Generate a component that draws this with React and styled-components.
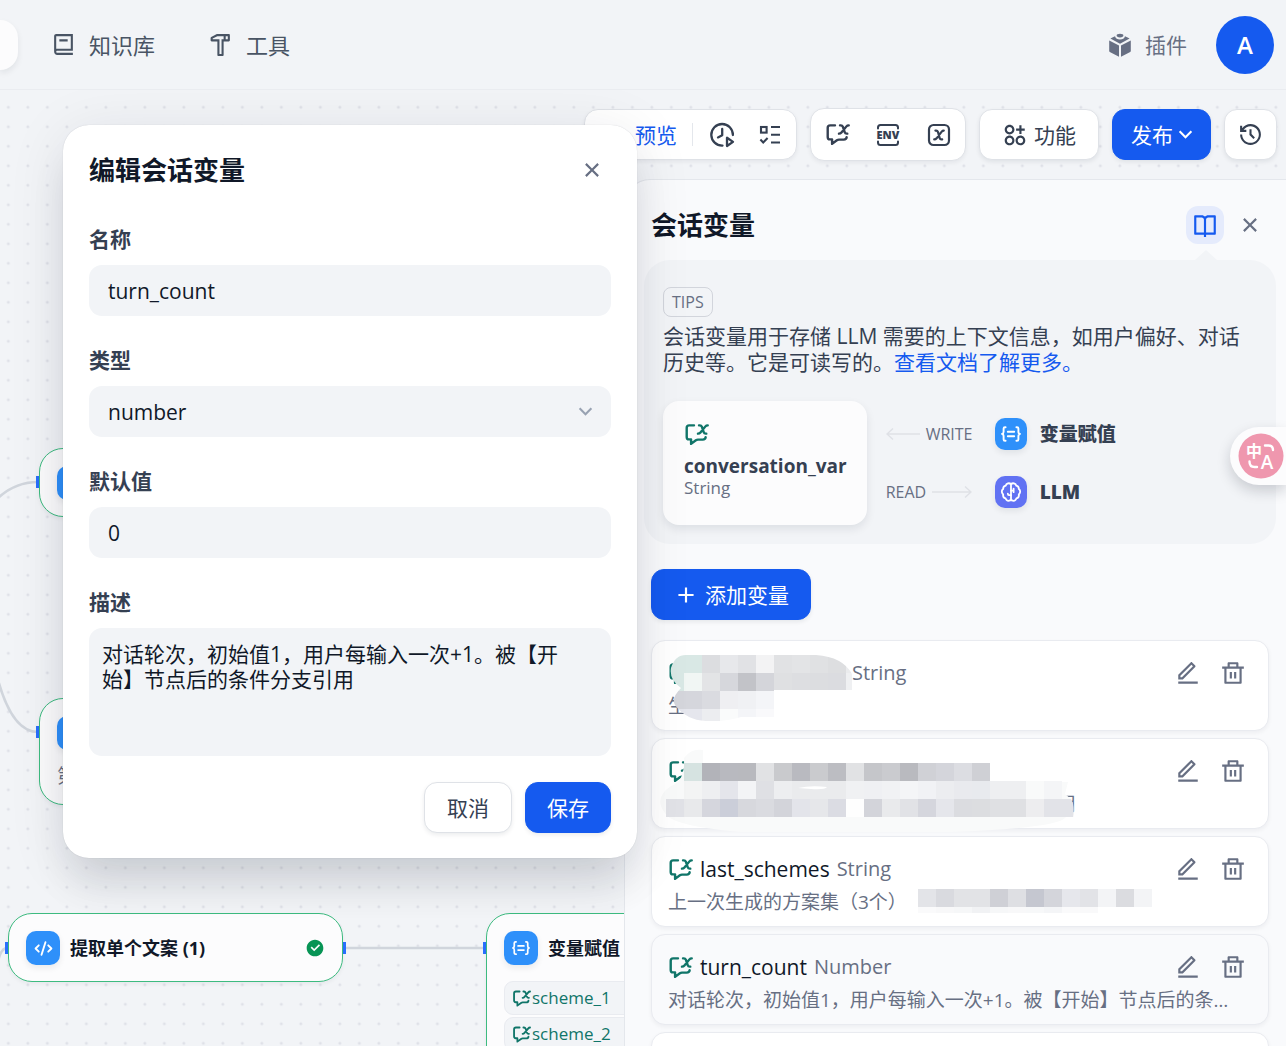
import React, { useState } from 'react'
import styled, { createGlobalStyle } from 'styled-components'
import {
    RiAddLine,
    RiApps2AddLine,
    RiArrowDownSLine,
    RiBook2Line,
    RiBookOpenLine,
    RiCheckboxCircleFill,
    RiCloseLine,
    RiDeleteBinLine,
    RiEditLine,
    RiHammerLine,
    RiHistoryLine,
    RiPlayLargeLine,
} from 'react-icons/ri'
import { CodeXml } from 'lucide-react'

const GlobalStyle = createGlobalStyle`
    * {
        box-sizing: border-box;
    }

    body {
        margin: 0;
        background: #f2f4f7;
        color: #101828;
        font-family: 'Open Sans', 'Noto Sans CJK SC', sans-serif;
        font-size: 21px;
        line-height: 26px;
    }

    button,
    input,
    select,
    textarea {
        font: inherit;
        color: inherit;
        margin: 0;
    }

    button {
        cursor: pointer;
    }

    svg {
        flex-shrink: 0;
        display: block;
    }

    h2,
    p {
        margin: 0;
    }
`

const Page = styled.div`
    display: flex;
    flex-direction: column;
    height: 100vh;
    overflow: hidden;
`

/* header */

const Header = styled.header`
    display: flex;
    align-items: center;
    height: 90px;
    padding-right: 12px;
    border-bottom: 1px solid #eaecf0;
`

const ActiveTab = styled.div`
    width: 18px;
    height: 50px;
    margin-right: 33px;
    border-radius: 0 18px 18px 0;
    background: #fcfcfd;
    box-shadow: 0 3px 6px rgba(16, 24, 40, 0.08);
`

const Nav = styled.nav`
    display: flex;
    flex: 1;
    gap: 53px;
`

const NavLink = styled.a`
    display: flex;
    align-items: center;
    gap: 13px;
    font-size: 22px;
    line-height: 24px;
    color: #495464;
    text-decoration: none;
`

const PluginLink = styled(NavLink)`
    margin-right: 29px;
    font-size: 21px;
    color: #676f83;
`

const Avatar = styled.button`
    width: 58px;
    height: 58px;
    padding: 0;
    border: 0;
    border-radius: 50%;
    background: #155aef;
    color: #fff;
    font-size: 24px;
    font-weight: 600;
`

/* workspace */

const Workspace = styled.main`
    position: relative;
    display: flex;
    flex: 1;
    flex-direction: column;
    min-height: 0;
    overflow: hidden;
    border-top-right-radius: 16px;
`

const Canvas = styled.div`
    position: absolute;
    inset: 0;
`

const CanvasDrawing = styled.svg`
    position: absolute;
    inset: 0;
    width: 100%;
    height: 100%;
`

const NodeCard = styled.div`
    position: absolute;
    left: ${p => p.$x}px;
    top: ${p => p.$y}px;
    width: 335px;
    min-height: ${p => p.$h}px;
    padding: 17px 17px 16px;
    border: 1px solid #3dbb80;
    border-radius: 24px;
    background: #fcfcfd;
    box-shadow: 0 2px 4px rgba(16, 24, 40, 0.05);
`

const NodeHead = styled.div`
    display: flex;
    align-items: center;
    gap: 10px;
    font-size: 18px;
    font-weight: 700;

    & > span {
        flex: 1;
    }
`

const NodeText = styled.p`
    margin-top: 14px;
    font-size: 19px;
    line-height: 24px;
    color: #676f83;
`

const NodeVar = styled.div`
    display: flex;
    align-items: center;
    gap: 1px;
    height: 34px;
    margin-top: ${p => (p.$first ? 16 : 2)}px;
    padding: 0 7px;
    border: 1px solid #e9ebf0;
    border-radius: 9px;
    background: #f2f4f7;
    color: #107569;
    font-size: 17px;
`

const BlockIcon = styled.span`
    display: flex;
    align-items: center;
    justify-content: center;
    flex: 0 0 auto !important;
    width: ${p => p.$size}px;
    height: ${p => p.$size}px;
    border-radius: 10px;
    background: ${p => p.$color};
    color: #fff;
    box-shadow: 0 3px 6px rgba(16, 24, 40, 0.08);
`

/* toolbar */

const Toolbar = styled.div`
    position: relative;
    display: flex;
    align-items: center;
    justify-content: flex-end;
    gap: 13px;
    height: 89px;
    padding-right: 9px;
    flex-shrink: 0;
`

const ToolGroup = styled.div`
    display: flex;
    align-items: center;
    gap: ${p => p.$gap}px;
    height: ${p => p.$height}px;
    padding: 0 7px;
    border: 1px solid #dfe2e7;
    border-radius: 14px;
    background: #fff;
    box-shadow: 0 2px 4px rgba(16, 24, 40, 0.06);
`

const Divider = styled.span`
    width: 1px;
    height: 23px;
    background: #e4e7ec;
`

const IconButton = styled.button`
    display: flex;
    align-items: center;
    justify-content: center;
    width: 38px;
    height: 38px;
    padding: 0;
    border: 0;
    border-radius: 12px;
    background: ${p => (p.$active ? '#e5ebfc' : 'transparent')};
    color: ${p => (p.$active ? '#155aef' : p.$dark ? '#354052' : '#676f83')};
`

const RunButton = styled.button`
    display: flex;
    align-items: center;
    gap: 7px;
    height: 38px;
    padding: 0 5px 0 12px;
    border: 0;
    background: transparent;
    color: #155aef;
`

const Button = styled.button`
    display: flex;
    align-items: center;
    justify-content: center;
    gap: ${p => p.$gap || 0}px;
    height: 51px;
    padding: 0 ${p => p.$padRight || p.$pad}px 0 ${p => p.$pad}px;
    border: 1px solid ${p => (p.$primary ? '#155aef' : '#dfe2e7')};
    border-radius: 13px;
    background: ${p => (p.$primary ? '#155aef' : '#fff')};
    color: ${p => (p.$primary ? '#fff' : '#354052')};
    box-shadow: 0 2px 4px rgba(16, 24, 40, 0.08);
`

/* side panel */

const Panel = styled.aside`
    position: relative;
    flex: 1;
    align-self: flex-end;
    width: min(662px, 100%);
    min-height: 0;
    padding: 26px 17px 0 26px;
    border: 1px solid #e4e7ec;
    border-width: 1px 0 0 1px;
    border-top-left-radius: 26px;
    background: #f9fafc;
`

const PanelHead = styled.div`
    display: flex;
    align-items: center;
    gap: 7px;

    & > h2 {
        flex: 1;
    }
`

const Title = styled.h2`
    font-size: 26px;
    line-height: 38px;
    font-weight: 700;
`

const Tips = styled.section`
    position: relative;
    margin: 16px -7px 25px;
    padding: 27px 19px 19px;
    border-radius: 26px;
    background: #f2f4f7;

    &::before {
        content: '';
        position: absolute;
        top: -10px;
        right: 59px;
        border: 11px solid transparent;
        border-top: 0;
        border-bottom: 10px solid #f2f4f7;
    }
`

const Tag = styled.span`
    display: inline-flex;
    align-items: center;
    height: 30px;
    margin-bottom: 6px;
    padding: 0 8px;
    border: 1px solid #d2d5dc;
    border-radius: 8px;
    font-size: 16px;
    color: #676f83;
    vertical-align: top;
`

const TipsText = styled.p`
    color: #354052;

    & > a {
        color: #155aef;
        text-decoration: none;
    }
`

const Flow = styled.div`
    display: flex;
    gap: 19px;
    margin-top: 26px;
`

const VarCard = styled.div`
    height: 124px;
    padding: 21px 20px 0 21px;
    border-radius: 16px;
    background: #fcfcfd;
    box-shadow: 0 4px 10px rgba(16, 24, 40, 0.09);
    color: #354052;
    line-height: 24px;

    & > svg {
        margin-bottom: 7px;
    }

    & > strong {
        display: block;
        font-size: 19px;
        font-weight: 700;
    }

    & > span {
        display: block;
        font-size: 17px;
        line-height: 20px;
        color: #676f83;
    }
`

const FlowRows = styled.div`
    display: flex;
    flex-direction: column;
    gap: 26px;
    padding-top: 17px;
`

const FlowRow = styled.div`
    display: flex;
    align-items: center;
    height: 32px;
    color: #354052;
    font-size: 19px;
    font-weight: 700;

    & > strong {
        margin-left: 13px;
    }
`

const FlowLabel = styled.span`
    display: flex;
    align-items: center;
    gap: 6px;
    width: 109px;
    color: #676f83;
    font-size: 16px;
    font-weight: 400;
`

const VarList = styled.ul`
    display: flex;
    flex-direction: column;
    gap: 7px;
    margin: 20px 0 0;
    padding: 0;
    list-style: none;
`

const VarItem = styled.li`
    position: relative;
    height: 91px;
    padding: 12px 16px;
    border: 1px solid #e9ebf0;
    border-radius: 14px;
    background: ${p => (p.$active ? '#f9fafc' : '#fff')};
    box-shadow: 0 2px 4px rgba(16, 24, 40, 0.05);
`

const VarHead = styled.div`
    display: flex;
    align-items: center;
    gap: 7px;
    height: 40px;
`

const VarName = styled.span`
    min-width: ${p => p.$blank || 0}px;
`

const VarType = styled.span`
    flex: 1;
    font-size: 20px;
    color: #676f83;
`

const VarDesc = styled.p`
    margin-right: 8px;
    padding-left: ${p => p.$blank || 0}px;
    overflow: hidden;
    font-size: 19px;
    line-height: 26px;
    color: #676f83;
    text-overflow: ellipsis;
    white-space: nowrap;
`

const MosaicSvg = styled.svg`
    position: absolute;
    top: -1px;
    left: -1px;
    overflow: visible;
    pointer-events: none;
`

/* dialog */

const Dialog = styled.form`
    position: absolute;
    top: 35px;
    left: 63px;
    width: min(574px, 100%);
    padding: 26px 26px 25px;
    border-radius: 26px;
    background: #fff;
    box-shadow: 0 0 1px rgba(16, 24, 40, 0.2), 0 32px 40px -8px rgba(16, 24, 40, 0.12),
        0 8px 60px rgba(16, 24, 40, 0.09);
`

const DialogHead = styled.div`
    display: flex;
    align-items: center;
    justify-content: space-between;
    margin-bottom: 38px;
`

const Field = styled.div`
    position: relative;
    margin-bottom: ${p => (p.$last ? 26 : 32)}px;

    & > svg {
        position: absolute;
        right: 13px;
        bottom: 13px;
        color: #98a2b2;
        pointer-events: none;
    }
`

const Label = styled.label`
    display: block;
    margin-bottom: 14px;
    color: #354052;
    font-weight: 700;
    line-height: 24px;
`

const Input = styled.input`
    display: block;
    width: 100%;
    height: 51px;
    padding: 0 19px;
    border: 0;
    border-radius: 13px;
    background: #f2f4f7;
`

const Select = styled(Input).attrs({ as: 'select' })`
    appearance: none;
`

const TextArea = styled.textarea`
    display: block;
    width: 100%;
    height: 128px;
    padding: 14px 22px 13px 13px;
    border: 0;
    border-radius: 13px;
    background: #f2f4f7;
    line-height: 25px;
    resize: none;
`

const DialogFoot = styled.div`
    display: flex;
    justify-content: flex-end;
    gap: 13px;
`

const TranslateTab = styled.button`
    position: absolute;
    top: 337px;
    right: 0;
    width: 56px;
    height: 58px;
    padding: 0 0 0 8px;
    border: 0;
    border-radius: 29px 0 0 29px;
    background: #fcfcfd;
    box-shadow: 0 6px 14px rgba(16, 24, 40, 0.18);
`

/* icons */

const BubbleX = ({ size = 24, color = 'currentColor' }) => (
    <svg width={size} height={size} viewBox="0 0 24 24" fill="none" stroke={color} strokeWidth="2.3" strokeLinecap="round" strokeLinejoin="round">
        <path d="M9.6 3.2H5Q2.6 3.2 2.6 5.6V14.3Q2.6 16.7 4.6 16.7H6.8V21L11.4 17.6Q12.4 16.9 13.4 16.9H18Q20.6 16.9 20.8 14.6" />
        <path d="M14.4 3.2H15.2Q16.6 3.2 17.1 4.5L18.9 9.8Q19.4 11.2 20.8 11.2H21.4M22.8 3.2Q21.4 3.2 20.6 4.2L15.8 10Q14.8 11.2 13.4 11.2" />
    </svg>
)

const EnvIcon = () => (
    <svg width="26" height="24" viewBox="0 0 26 24" fill="none" stroke="currentColor" strokeWidth="2" strokeLinecap="round">
        <path d="M3 5.5V4.5Q3 2 5.5 2H20.5Q23 2 23 4.5V5.5M3 18.5V19.5Q3 22 5.5 22H20.5Q23 22 23 19.5V18.5" />
        <text x="13" y="16" textAnchor="middle" fontSize="11" fontWeight="800" fontFamily="Open Sans, sans-serif" fill="currentColor" stroke="none">
            ENV
        </text>
    </svg>
)

const GlobalVarIcon = () => (
    <svg width="24" height="24" viewBox="0 0 24 24" fill="none" stroke="currentColor" strokeWidth="2.2" strokeLinecap="round">
        <rect x="2" y="2" width="20" height="20" rx="4.5" />
        <path d="M8.4 7.6H9.2Q10.5 7.6 10.9 8.8L12.7 15.1Q13.1 16.4 14.3 16.4H15.2M16.8 7.6Q15.5 7.6 14.7 8.6L9.6 15.3Q8.7 16.4 7.2 16.4" />
    </svg>
)

const ClockPlayIcon = () => (
    <svg width="26" height="26" viewBox="0 0 26 26" fill="none" stroke="currentColor" strokeWidth="2.3" strokeLinejoin="round" strokeLinecap="round">
        <path d="M13.5 23.6A10.8 10.8 0 1 1 23.9 13" />
        <path d="M13.2 7V13.2L9 15.4" />
        <path d="M18 15.8V24L24 19.9Z" />
    </svg>
)

const ChecklistIcon = () => (
    <svg width="24" height="24" viewBox="0 0 24 24" fill="none" stroke="currentColor" strokeWidth="2.1">
        <rect x="3" y="4" width="5.6" height="5.6" />
        <path d="M13 4H22M13 11.7H22M13 19.5H22M2.4 16.6L5.2 19.4L9.6 15" />
    </svg>
)

const PluginIcon = () => (
    <svg width="24" height="26" viewBox="0 0 24 26" fill="currentColor">
        <path d="M1.2 8.4L11 13.6V24.8L1.8 20Q1.2 19.7 1.2 19ZM22.8 8.4L13 13.6V24.8L22.2 20Q22.8 19.7 22.8 19Z" />
        <path d="M2.4 6.6L7 4.2Q8 7.4 12 7.4T17 4.2L21.6 6.6L12 11.8Z" />
        <ellipse cx="12" cy="3.6" rx="3.4" ry="1.8" />
    </svg>
)

const AssignIcon = ({ size = 22 }) => (
    <svg width={size} height={size} viewBox="0 0 22 22" fill="none" stroke="currentColor" strokeWidth="1.9" strokeLinecap="round" strokeLinejoin="round">
        <path d="M5.6 4.2H5Q3.6 4.2 3.6 5.6V8.8Q3.6 10.8 2 11Q3.6 11.2 3.6 13.2V16.4Q3.6 17.8 5 17.8H5.6M16.4 4.2H17Q18.4 4.2 18.4 5.6V8.8Q18.4 10.8 20 11Q18.4 11.2 18.4 13.2V16.4Q18.4 17.8 17 17.8H16.4" />
        <path d="M7.8 8.7H14.2M7.8 13.3H14.2" />
    </svg>
)

const BrainIcon = () => (
    <svg width="22" height="22" viewBox="0 0 22 22" fill="none" stroke="currentColor" strokeWidth="1.8" strokeLinecap="round" strokeLinejoin="round">
        <path d="M11 2.6V19.4M11 3.4Q9.4 1.6 7.4 2.6Q6 3.2 5.8 4.6Q3 5.2 3.2 8Q1.4 9.2 2 11.4Q2.2 12.6 3.2 13.4Q2.6 16.6 5.6 17.4Q6.2 19.8 8.6 19.8Q10.2 19.8 11 18.6Q11.8 19.8 13.4 19.8Q15.8 19.8 16.4 17.4Q19.4 16.6 18.8 13.4Q19.8 12.6 20 11.4Q20.6 9.2 18.8 8Q19 5.2 16.2 4.6Q16 3.2 14.6 2.6Q12.6 1.6 11 3.4Z" />
        <path d="M11 9.6H13.4M13.6 7.6V11.2M11 14.2H9Q7.8 14.2 7.8 12.6" />
    </svg>
)

const ArrowLine = ({ left }) => (
    <svg width={left ? 34 : 40} height="12" viewBox={left ? '0 0 34 12' : '0 0 40 12'} fill="none" stroke="#dfe1e6" strokeWidth="1.4">
        <path d={left ? 'M34 6H1M7 0.5L1 6L7 11.5' : 'M0 6H39M33 0.5L39 6L33 11.5'} />
    </svg>
)

const TranslateIcon = () => (
    <svg width="46" height="46" viewBox="0 0 46 46" fill="none" stroke="#fff" strokeWidth="2.4" strokeLinecap="round">
        <circle cx="23" cy="23" r="22.5" fill="#ef97ae" stroke="none" />
        <path d="M27 12.5H30.5Q35 12.5 35 17M11.5 28.5Q11.5 34 16.5 34H19" />
        <text x="16" y="24" textAnchor="middle" fontSize="16" fontWeight="700" fill="#fff" stroke="none" fontFamily="Noto Sans CJK SC, sans-serif">
            中
        </text>
        <text x="29" y="36" textAnchor="middle" fontSize="19" fontWeight="600" fill="#fff" stroke="none" fontFamily="Open Sans, sans-serif">
            A
        </text>
    </svg>
)

/* blurred-out parts of the list */

const CELL = 18

const mosaics = {
    first: {
        clip: 'M35 15H165Q192 17 201 34V50H123V77H90Q75 82 55 81Q35 80 24 65Q20 58 30 48Q18 40 20 28Q24 15 35 15Z',
        rows: [
            { x: 15, y: 15, h: 18, colors: '#d9e8e5 #d9e8e5 #dcdde0 #e7e8eb #e1e2e5 #f3f3f4 #e1e2e4 #e3e4e6 #e0e1e3 #dddee0 #eaebed' },
            { x: 15, y: 33, h: 18, colors: '#d9e8e5 #f1f6f4 #e3e4e6 #d6d7dc #c2c3c8 #d4d5da #dfe0e2 #dddee1 #dcdde0 #dbdce0 #eff0f2' },
            { x: 15, y: 51, h: 18, colors: '#d4d5db #d5d6dc #dadbe0 #efeff2 #f0f1f4 #f4f5f8' },
            { x: 15, y: 69, h: 12, colors: '#e4e5ec #e5e6ed #ecedf0 #fafbfb #f4f5f8 #f9f9fb' },
        ],
    },
    second: {
        clip: 'M15 20H418L414 56L420 61Q424 67 422 80H15Z',
        smear: 'M33 20Q40 10 52 12V44H417L414 56L420 61Q425 72 414 80Q405 90 300 94H90Q20 88 14 75Q2 60 20 48Q34 44 33 20Z',
        rows: [
            { x: 33, y: 25, h: 18, colors: '#d6e3e1 #b2b3b9 #b8b9bf #b8b9be #e1e2e4 #c9cacd #b9bac0 #cacbce #bcbdc2 #e1e2e4 #c5c6ca #cacbcf #b9babf #d0d1d6 #d4d5db #dcdde2 #cfd0d5' },
            { x: 33, y: 43, h: 18, colors: '#f3f4f4 #eeeff1 #e4e5eb #f3f4f6 #dfe0e4 #edeef0 #eaebed #eaebed #eaebed #f0f1f3 #eff0f3 #f1f2f4 #f4f5f7 #f1f2f5 #ecedf0 #e9eaee #e8eaee #eeeff1 #eeeff1 #f9fafa #f4f5f7' },
            { x: 15, y: 61, h: 18, colors: '#e1e2e7 #e8e9eb #d5d6dd #cbced9 #d7d8dd #dadbe0 #d3d4da #e3e4ea #e6e7ea #dbdce3 #fefefe #d3d4da #e9eaec #e1e2e6 #d5d6dd #e5e6eb #dbdce0 #dcdde0 #dfe0e3 #dfe0e3 #ededef #e2e3e8 #e2e3e8' },
        ],
    },
    third: {
        rows: [
            { x: 267, y: 53, h: 18, colors: '#e3e4e8 #d9dadf #e2e3e6 #e2e3e6 #cfd0d6 #dedfe3 #c5c7d0 #d4d5db #e6e7ec #e2e3e7 #f3f4f6 #dbdce0 #f3f4f6' },
            { x: 267, y: 71, h: 6, colors: '#fafafb #f8f8f9 #f6f7f8 #f1f2f4 #f6f7f8 #f8f8f9 #f7f8f9 #f4f5f7 #fafafb #f9f9fa' },
        ],
    },
}

const Mosaic = ({ name }) => {
    const { rows, clip, smear } = mosaics[name]
    return (
        <MosaicSvg width="1" height="1" aria-hidden="true">
            {clip && (
                <clipPath id={`clip-${name}`}>
                    <path d={clip} />
                </clipPath>
            )}
            {smear && <path d={smear} fill="#f9fafa" />}
            <g clipPath={clip ? `url(#clip-${name})` : undefined} shapeRendering="crispEdges">
                {rows.map(row =>
                    row.colors.split(' ').map((color, i) => (
                        <rect key={`${row.y}-${i}`} x={row.x + i * CELL} y={row.y} width={CELL} height={row.h} fill={color} />
                    )),
                )}
            </g>
            {name === 'second' && <path d="M147 50Q160 47 176 49Q174 52 160 51Z" fill="#fff" />}
        </MosaicSvg>
    )
}

const variables = [
    { id: 1, name: '', nameBlank: 145, type: 'String', desc: '生', mosaic: 'first' },
    { id: 2, name: '', type: '', desc: '用', descBlank: 389, mosaic: 'second' },
    { id: 3, name: 'last_schemes', type: 'String', desc: '上一次生成的方案集（3个）', mosaic: 'third' },
    { id: 4, name: 'turn_count', type: 'Number', desc: '对话轮次，初始值1，用户每输入一次+1。被【开始】节点后的条件分支引用', active: true },
    { id: 5, name: '', type: '', desc: '' },
]

const CanvasLayer = () => (
    <Canvas>
        <CanvasDrawing>
            <defs>
                <pattern id="dots" x="-1.4" y="7.5" width="19.5" height="19.5" patternUnits="userSpaceOnUse">
                    <circle cx="9.75" cy="9.75" r="1.5" fill="#dfe1e8" />
                </pattern>
            </defs>
            <rect width="100%" height="100%" fill="url(#dots)" />
            <g fill="none" stroke="#d0d5dc" strokeWidth="2.6">
                <path d="M-4 410Q14 392 38 392" />
                <path d="M-2 590C8 626 22 642 38 642" />
                <path d="M-2 872Q0 860 6 858" />
                <path d="M343 858H486" />
            </g>
            <g fill="#2970ff">
                <rect x="36" y="386" width="3" height="12" />
                <rect x="36" y="636" width="3" height="12" />
                <rect x="5" y="852" width="3" height="12" />
                <rect x="343" y="852" width="3" height="12" />
                <rect x="483" y="852" width="3" height="12" />
            </g>
        </CanvasDrawing>
        <NodeCard $x={39} $y={358} $h={69}>
            <BlockIcon $size={34} $color="#2e90fa" />
        </NodeCard>
        <NodeCard $x={39} $y={608} $h={107}>
            <BlockIcon $size={34} $color="#2e90fa" />
            <NodeText>第</NodeText>
        </NodeCard>
        <NodeCard $x={8} $y={823} $h={69}>
            <NodeHead>
                <BlockIcon $size={34} $color="#2e90fa">
                    <CodeXml size={19} strokeWidth={2.4} />
                </BlockIcon>
                <span>提取单个文案 (1)</span>
                <RiCheckboxCircleFill size={20} color="#079455" />
            </NodeHead>
        </NodeCard>
        <NodeCard $x={486} $y={823} $h={180}>
            <NodeHead>
                <BlockIcon $size={34} $color="#2e90fa">
                    <AssignIcon size={20} />
                </BlockIcon>
                <span>变量赋值</span>
            </NodeHead>
            <NodeVar $first>
                <BubbleX size={19} />
                scheme_1
            </NodeVar>
            <NodeVar>
                <BubbleX size={19} />
                scheme_2
            </NodeVar>
        </NodeCard>
    </Canvas>
)

const VariableRow = ({ item }) => (
    <VarItem $active={item.active}>
        <VarHead>
            <BubbleX size={25} color="#107569" />
            <VarName $blank={item.nameBlank}>{item.name}</VarName>
            <VarType>{item.type}</VarType>
            <IconButton type="button" aria-label="编辑">
                <RiEditLine size={26} />
            </IconButton>
            <IconButton type="button" aria-label="删除">
                <RiDeleteBinLine size={26} />
            </IconButton>
        </VarHead>
        <VarDesc $blank={item.descBlank}>{item.desc}</VarDesc>
        {item.mosaic && <Mosaic name={item.mosaic} />}
    </VarItem>
)

const VariablePanel = () => (
    <Panel>
        <PanelHead>
            <Title>会话变量</Title>
            <IconButton type="button" $active aria-label="说明">
                <RiBookOpenLine size={26} />
            </IconButton>
            <IconButton type="button" aria-label="关闭">
                <RiCloseLine size={26} />
            </IconButton>
        </PanelHead>
        <Tips>
            <Tag>TIPS</Tag>
            <TipsText>
                会话变量用于存储 LLM 需要的上下文信息，如用户偏好、对话历史等。它是可读写的。
                <a href="#docs">查看文档了解更多。</a>
            </TipsText>
            <Flow>
                <VarCard>
                    <BubbleX size={25} color="#107569" />
                    <strong>conversation_var</strong>
                    <span>String</span>
                </VarCard>
                <FlowRows>
                    <FlowRow>
                        <FlowLabel>
                            <ArrowLine left />
                            WRITE
                        </FlowLabel>
                        <BlockIcon $size={32} $color="#2e90fa">
                            <AssignIcon />
                        </BlockIcon>
                        <strong>变量赋值</strong>
                    </FlowRow>
                    <FlowRow>
                        <FlowLabel>
                            READ
                            <ArrowLine />
                        </FlowLabel>
                        <BlockIcon $size={32} $color="#6172f3">
                            <BrainIcon />
                        </BlockIcon>
                        <strong>LLM</strong>
                    </FlowRow>
                </FlowRows>
            </Flow>
        </Tips>
        <Button type="button" $primary $gap={6} $pad={21}>
            <RiAddLine size={26} />
            添加变量
        </Button>
        <VarList>
            {variables.map(item => (
                <VariableRow key={item.id} item={item} />
            ))}
        </VarList>
    </Panel>
)

const EditDialog = () => {
    const [values, setValues] = useState({
        name: 'turn_count',
        type: 'number',
        value: '0',
        desc: '对话轮次，初始值1，用户每输入一次+1。被【开始】节点后的条件分支引用',
    })

    const handleChange = event => {
        setValues({ ...values, [event.target.name]: event.target.value })
    }

    return (
        <Dialog role="dialog" aria-labelledby="dialog-title" onSubmit={e => e.preventDefault()}>
            <DialogHead>
                <Title id="dialog-title">编辑会话变量</Title>
                <IconButton type="button" aria-label="关闭">
                    <RiCloseLine size={26} />
                </IconButton>
            </DialogHead>
            <Field>
                <Label htmlFor="var-name">名称</Label>
                <Input id="var-name" name="name" value={values.name} onChange={handleChange} />
            </Field>
            <Field>
                <Label htmlFor="var-type">类型</Label>
                <Select id="var-type" name="type" value={values.type} onChange={handleChange}>
                    <option value="string">string</option>
                    <option value="number">number</option>
                    <option value="object">object</option>
                </Select>
                <RiArrowDownSLine size={25} />
            </Field>
            <Field>
                <Label htmlFor="var-value">默认值</Label>
                <Input id="var-value" name="value" value={values.value} onChange={handleChange} />
            </Field>
            <Field $last>
                <Label htmlFor="var-desc">描述</Label>
                <TextArea id="var-desc" name="desc" value={values.desc} onChange={handleChange} />
            </Field>
            <DialogFoot>
                <Button type="button" $pad={22}>
                    取消
                </Button>
                <Button type="submit" $primary $pad={21}>
                    保存
                </Button>
            </DialogFoot>
        </Dialog>
    )
}

const App = () => (
    <Page>
        <GlobalStyle />
        <Header>
            <ActiveTab />
            <Nav>
                <NavLink href="#datasets">
                    <RiBook2Line size={25} />
                    知识库
                </NavLink>
                <NavLink href="#tools">
                    <RiHammerLine size={25} />
                    工具
                </NavLink>
            </Nav>
            <PluginLink href="#plugins">
                <PluginIcon />
                插件
            </PluginLink>
            <Avatar type="button">A</Avatar>
        </Header>
        <Workspace>
            <CanvasLayer />
            <Toolbar>
                <ToolGroup $gap={10} $height={51}>
                    <RunButton type="button">
                        <RiPlayLargeLine size={24} />
                        预览
                    </RunButton>
                    <Divider />
                    <IconButton type="button" $dark aria-label="运行历史">
                        <ClockPlayIcon />
                    </IconButton>
                    <IconButton type="button" $dark aria-label="检查清单">
                        <ChecklistIcon />
                    </IconButton>
                </ToolGroup>
                <ToolGroup $gap={13} $height={53}>
                    <IconButton type="button" $dark aria-label="会话变量">
                        <BubbleX size={25} />
                    </IconButton>
                    <IconButton type="button" $dark aria-label="环境变量">
                        <EnvIcon />
                    </IconButton>
                    <IconButton type="button" $dark aria-label="系统变量">
                        <GlobalVarIcon />
                    </IconButton>
                </ToolGroup>
                <Button type="button" $gap={6} $pad={22}>
                    <RiApps2AddLine size={26} />
                    功能
                </Button>
                <Button type="button" $primary $pad={18} $padRight={12}>
                    发布
                    <RiArrowDownSLine size={25} />
                </Button>
                <Button type="button" $pad={13} aria-label="版本历史">
                    <RiHistoryLine size={25} />
                </Button>
            </Toolbar>
            <VariablePanel />
            <EditDialog />
            <TranslateTab type="button" aria-label="翻译">
                <TranslateIcon />
            </TranslateTab>
        </Workspace>
    </Page>
)

export default App
